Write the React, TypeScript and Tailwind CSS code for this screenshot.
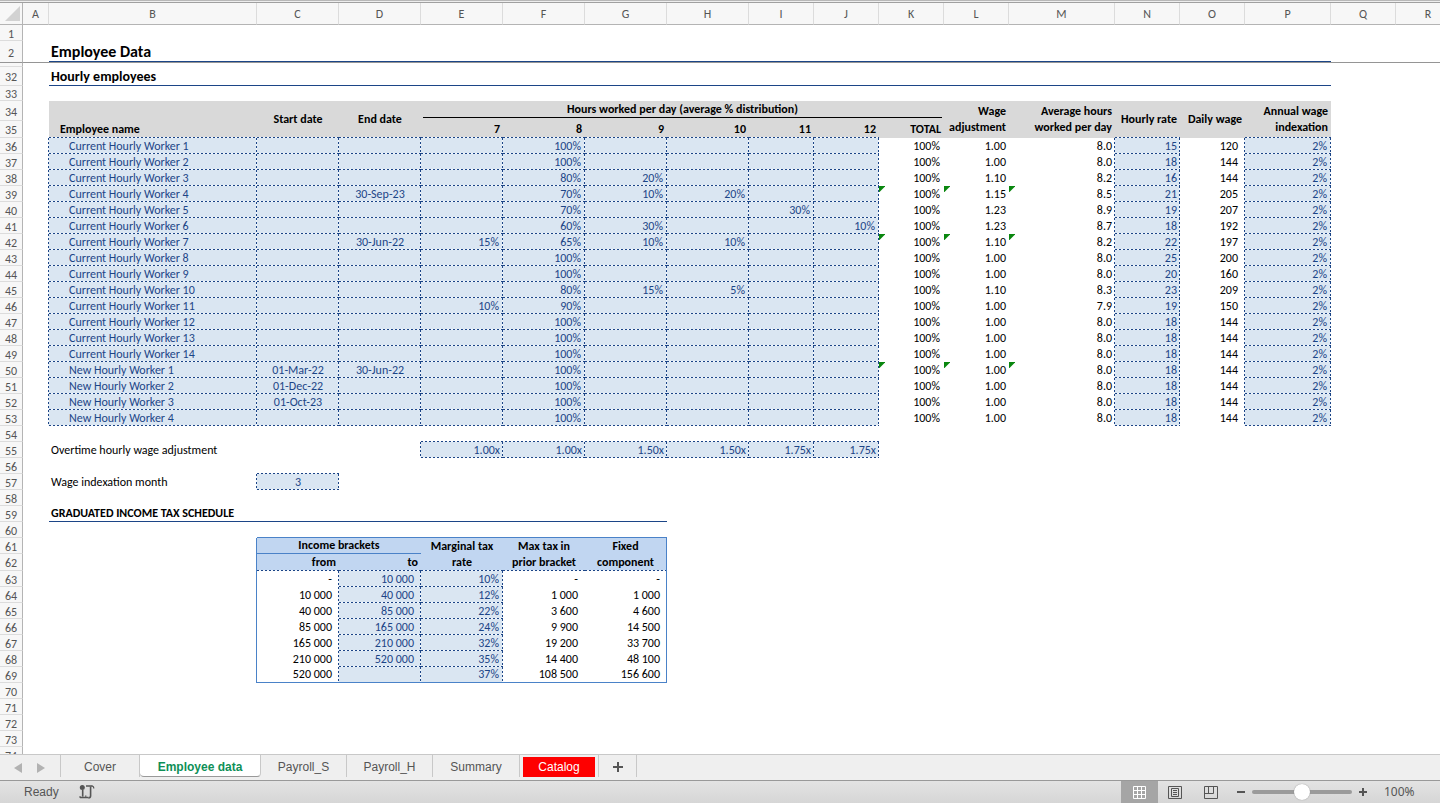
import type { ReactNode } from "react";
import clsx from "clsx";

/* Grid lines are painted as backgrounds so every cell keeps its full width. */
const DASH_BOTH =
  "[background-image:repeating-linear-gradient(90deg,#1c4587_0_2px,#f2f7fc_2px_4px),repeating-linear-gradient(180deg,#1c4587_0_2px,#f2f7fc_2px_4px)] [background-size:100%_1px,1px_100%] [background-position:0_100%,100%_0] bg-no-repeat";
const DASH_RIGHT =
  "[background-image:repeating-linear-gradient(180deg,#1c4587_0_2px,#f2f7fc_2px_4px)] [background-size:1px_100%] [background-position:100%_0] bg-no-repeat";
const DASH_BOTTOM =
  "[background-image:repeating-linear-gradient(90deg,#1c4587_0_2px,#f2f7fc_2px_4px)] [background-size:100%_1px] [background-position:0_100%] bg-no-repeat";

const INPUT = "bg-[#dae6f2] text-[#1c4587]";
const HEAD = "bg-[#d9d9d9] font-bold";
const BAND = "bg-[#c1d6f1] font-bold";
const NAVY_LINE = "border-b border-[#1c4587]";
const BLUE_B = "border-b border-[#4a82c8]";
const BLUE_R = "border-r border-[#4a82c8]";

const columns: [string, string][] = [
  ["A", "w-[26px]"],
  ["B", "w-[208px]"],
  ["C", "w-[82px]"],
  ["D", "w-[82px]"],
  ["E", "w-[82px]"],
  ["F", "w-[82px]"],
  ["G", "w-[82px]"],
  ["H", "w-[82px]"],
  ["I", "w-[65px]"],
  ["J", "w-[65px]"],
  ["K", "w-[65px]"],
  ["L", "w-[65px]"],
  ["M", "w-[106px]"],
  ["N", "w-[65px]"],
  ["O", "w-[65px]"],
  ["P", "w-[86px]"],
  ["Q", "w-[65px]"],
  ["R", ""],
];

type Worker = {
  name: string;
  start?: string;
  end?: string;
  hours: string[];
  adj: string;
  avg: string;
  rate: string;
  wage: string;
  flagged?: boolean;
};

const full = ["", "100%", "", "", "", ""];
const workers: Worker[] = [
  { name: "Current Hourly Worker 1", hours: full, adj: "1.00", avg: "8.0", rate: "15", wage: "120" },
  { name: "Current Hourly Worker 2", hours: full, adj: "1.00", avg: "8.0", rate: "18", wage: "144" },
  { name: "Current Hourly Worker 3", hours: ["", "80%", "20%", "", "", ""], adj: "1.10", avg: "8.2", rate: "16", wage: "144" },
  { name: "Current Hourly Worker 4", end: "30-Sep-23", hours: ["", "70%", "10%", "20%", "", ""], adj: "1.15", avg: "8.5", rate: "21", wage: "205", flagged: true },
  { name: "Current Hourly Worker 5", hours: ["", "70%", "", "", "30%", ""], adj: "1.23", avg: "8.9", rate: "19", wage: "207" },
  { name: "Current Hourly Worker 6", hours: ["", "60%", "30%", "", "", "10%"], adj: "1.23", avg: "8.7", rate: "18", wage: "192" },
  { name: "Current Hourly Worker 7", end: "30-Jun-22", hours: ["15%", "65%", "10%", "10%", "", ""], adj: "1.10", avg: "8.2", rate: "22", wage: "197", flagged: true },
  { name: "Current Hourly Worker 8", hours: full, adj: "1.00", avg: "8.0", rate: "25", wage: "200" },
  { name: "Current Hourly Worker 9", hours: full, adj: "1.00", avg: "8.0", rate: "20", wage: "160" },
  { name: "Current Hourly Worker 10", hours: ["", "80%", "15%", "5%", "", ""], adj: "1.10", avg: "8.3", rate: "23", wage: "209" },
  { name: "Current Hourly Worker 11", hours: ["10%", "90%", "", "", "", ""], adj: "1.00", avg: "7.9", rate: "19", wage: "150" },
  { name: "Current Hourly Worker 12", hours: full, adj: "1.00", avg: "8.0", rate: "18", wage: "144" },
  { name: "Current Hourly Worker 13", hours: full, adj: "1.00", avg: "8.0", rate: "18", wage: "144" },
  { name: "Current Hourly Worker 14", hours: full, adj: "1.00", avg: "8.0", rate: "18", wage: "144" },
  { name: "New Hourly Worker 1", start: "01-Mar-22", end: "30-Jun-22", hours: full, adj: "1.00", avg: "8.0", rate: "18", wage: "144", flagged: true },
  { name: "New Hourly Worker 2", start: "01-Dec-22", hours: full, adj: "1.00", avg: "8.0", rate: "18", wage: "144" },
  { name: "New Hourly Worker 3", start: "01-Oct-23", hours: full, adj: "1.00", avg: "8.0", rate: "18", wage: "144" },
  { name: "New Hourly Worker 4", hours: full, adj: "1.00", avg: "8.0", rate: "18", wage: "144" },
];

const brackets = [
  ["-", "10 000", "10%", "-", "-"],
  ["10 000", "40 000", "12%", "1 000", "1 000"],
  ["40 000", "85 000", "22%", "3 600", "4 600"],
  ["85 000", "165 000", "24%", "9 900", "14 500"],
  ["165 000", "210 000", "32%", "19 200", "33 700"],
  ["210 000", "520 000", "35%", "14 400", "48 100"],
  ["520 000", "", "37%", "108 500", "156 600"],
];

const overtime = ["1.00x", "1.00x", "1.50x", "1.50x", "1.75x", "1.75x"];

function Row({ n, h = "h-4", rule = "border-b-[#dcdcdc]", children }: { n: ReactNode; h?: string; rule?: string; children?: ReactNode }) {
  return (
    <tr className={h}>
      <th
        scope="row"
        className={clsx("border-r border-b border-r-[#b4b4b4] bg-[#f7f7f7] p-0 pt-[2px] text-center align-middle leading-3 font-normal text-[#555]", rule)}
      >
        {n}
      </th>
      {children}
    </tr>
  );
}

function Cell({ c, span, rows, children }: { c?: string; span?: number; rows?: number; children?: ReactNode }) {
  return (
    <td colSpan={span} rowSpan={rows} className={clsx("align-middle whitespace-nowrap", c)}>
      {children}
    </td>
  );
}

function Flag() {
  return (
    <svg className="absolute top-0 left-0 size-[6px]" viewBox="0 0 6 6" aria-hidden="true">
      <path d="M0 0H6.5L0 6.5Z" fill="#0a870f" />
    </svg>
  );
}

function Sheet() {
  const num = "pr-[3px] text-right";
  const pct = "pr-1 text-right";
  const acct = "pr-[7px] text-right";
  return (
    <table className="w-full min-w-[1400px] table-fixed border-separate border-spacing-0 font-[Calibri,Carlito,Lato,sans-serif] text-[12px] leading-[15px] text-black">
      <colgroup>
        <col className="w-[23px]" />
        {columns.map(([name, w]) => (
          <col key={name} className={w} />
        ))}
      </colgroup>
      <thead>
        <tr className="h-[22px]">
          <th className="border-r border-b border-[#b4b4b4] bg-[#f7f7f7] p-0" aria-label="Select all">
            <svg className="ml-[5px] size-[15px]" viewBox="0 0 15 15" aria-hidden="true">
              <path d="M15 0V15H0Z" fill="#d2d2d2" />
            </svg>
          </th>
          {columns.map(([name]) => (
            <th
              key={name}
              scope="col"
              className={clsx(
                "border-b border-r-[#dcdcdc] border-b-[#b4b4b4] bg-[#f7f7f7] pt-[2px] font-normal text-[#555]",
                name === "R" ? "pl-5" : "border-r",
              )}
            >
              {name}
            </th>
          ))}
        </tr>
      </thead>
      <tbody>
        <Row n="1">
          <Cell span={18} />
        </Row>
        <Row n="2" h="h-[22px]" rule="border-b-[#959595]">
          <Cell c="border-b border-[#959595]" />
          <Cell span={15} c="border-b border-[#959595]">
            <h1 className="border-b border-[#1c4587] pt-[2px] pl-[2px] text-[16px] leading-[18px] font-bold">Employee Data</h1>
          </Cell>
          <Cell span={2} c="border-b border-[#959595]" />
        </Row>
        <tr className="h-1">
          <th className="border-r border-b border-r-[#b4b4b4] border-b-[#dcdcdc] bg-[#f7f7f7] p-0" />
          <Cell span={18} />
        </tr>
        <Row n="32" h="h-[19px]">
          <Cell />
          <Cell span={15} c={NAVY_LINE}>
            <h2 className="pt-[2px] pl-[2px] text-[14px] leading-4 font-bold">Hourly employees</h2>
          </Cell>
          <Cell span={2} />
        </Row>
        <Row n="33" h="h-[15px]">
          <Cell span={18} />
        </Row>
        <Row n="34" h="h-5">
          <Cell />
          <Cell c={HEAD} />
          <Cell rows={2} c={clsx(HEAD, DASH_BOTTOM, "text-center")}>Start date</Cell>
          <Cell rows={2} c={clsx(HEAD, DASH_BOTTOM, "text-center")}>End date</Cell>
          <Cell span={7} c={clsx(HEAD, "align-top text-center")}>
            <div className="mx-[2px] border-b border-black pt-px">Hours worked per day (average % distribution)</div>
          </Cell>
          <Cell rows={2} c={clsx(HEAD, num, "pb-[2px] leading-4")}>Wage<br />adjustment</Cell>
          <Cell rows={2} c={clsx(HEAD, num, "pb-[2px] leading-4")}>Average hours<br />worked per day</Cell>
          <Cell rows={2} c={clsx(HEAD, DASH_BOTTOM, num)}>Hourly rate</Cell>
          <Cell rows={2} c={clsx(HEAD, num)}>Daily wage</Cell>
          <Cell rows={2} c={clsx(HEAD, DASH_BOTTOM, num, "pb-[2px] leading-4")}>Annual wage<br />indexation</Cell>
          <Cell span={2} />
        </Row>
        <Row n="35" h="h-[17px]">
          <Cell />
          <Cell c={clsx(HEAD, DASH_BOTTOM, "pl-[11px]")}>Employee name</Cell>
          {["7", "8", "9", "10", "11", "12"].map((h) => (
            <Cell key={h} c={clsx(HEAD, DASH_BOTTOM, num)}>{h}</Cell>
          ))}
          <Cell c={clsx(HEAD, num)}>TOTAL</Cell>
          <Cell span={2} />
        </Row>
        {workers.map((w, i) => (
          <Row key={w.name} n={36 + i}>
            <Cell c={DASH_RIGHT} />
            <Cell c={clsx(INPUT, DASH_BOTH, "pl-5")}>{w.name}</Cell>
            <Cell c={clsx(INPUT, DASH_BOTH, "text-center")}>{w.start}</Cell>
            <Cell c={clsx(INPUT, DASH_BOTH, "text-center")}>{w.end}</Cell>
            {w.hours.map((h, k) => (
              <Cell key={k} c={clsx(INPUT, DASH_BOTH, pct)}>{h}</Cell>
            ))}
            <Cell c={clsx("relative", pct)}>{w.flagged && <Flag />}100%</Cell>
            <Cell c={clsx("relative", num)}>{w.flagged && <Flag />}{w.adj}</Cell>
            <Cell c={clsx("relative", DASH_RIGHT, num)}>{w.flagged && <Flag />}{w.avg}</Cell>
            <Cell c={clsx(INPUT, DASH_BOTH, num)}>{w.rate}</Cell>
            <Cell c={clsx(DASH_RIGHT, acct)}>{w.wage}</Cell>
            <Cell c={clsx(INPUT, DASH_BOTH, pct)}>2%</Cell>
            <Cell span={2} />
          </Row>
        ))}
        <Row n="54">
          <Cell span={4} />
          <Cell span={6} c={DASH_BOTTOM} />
          <Cell span={8} />
        </Row>
        <Row n="55">
          <Cell />
          <Cell span={3} c={clsx(DASH_RIGHT, "pl-[2px]")}>Overtime hourly wage adjustment</Cell>
          {overtime.map((o, k) => (
            <Cell key={k} c={clsx(INPUT, DASH_BOTH, num)}>{o}</Cell>
          ))}
          <Cell span={8} />
        </Row>
        <Row n="56">
          <Cell span={2} />
          <Cell c={DASH_BOTTOM} />
          <Cell span={15} />
        </Row>
        <Row n="57">
          <Cell />
          <Cell c={clsx(DASH_RIGHT, "pl-[2px]")}>Wage indexation month</Cell>
          <Cell c={clsx(INPUT, DASH_BOTH, "text-center")}>3</Cell>
          <Cell span={15} />
        </Row>
        <Row n="58">
          <Cell span={18} />
        </Row>
        <Row n="59">
          <Cell />
          <Cell span={6} c={clsx(NAVY_LINE, "pl-[2px] font-bold")}>GRADUATED INCOME TAX SCHEDULE</Cell>
          <Cell span={11} />
        </Row>
        <Row n="60">
          <Cell span={2} />
          <Cell span={5} c={BLUE_B} />
          <Cell span={11} />
        </Row>
        <Row n="61">
          <Cell />
          <Cell c={BLUE_R} />
          <Cell span={2} c={clsx(BAND, BLUE_B, "text-center")}>Income brackets</Cell>
          <Cell c={clsx(BAND, "text-center")}>Marginal tax</Cell>
          <Cell c={clsx(BAND, "text-center")}>Max tax in</Cell>
          <Cell c={clsx(BAND, BLUE_R, "text-center")}>Fixed</Cell>
          <Cell span={11} />
        </Row>
        <Row n="62" h="h-[17px]">
          <Cell />
          <Cell c={BLUE_R} />
          <Cell c={clsx(BAND, DASH_BOTTOM, num)}>from</Cell>
          <Cell c={clsx(BAND, DASH_BOTTOM, num)}>to</Cell>
          <Cell c={clsx(BAND, DASH_BOTTOM, "text-center")}>rate</Cell>
          <Cell c={clsx(BAND, DASH_BOTTOM, "text-center")}>prior bracket</Cell>
          <Cell c={clsx(BAND, DASH_BOTTOM, BLUE_R, "text-center")}>component</Cell>
          <Cell span={11} />
        </Row>
        {brackets.map(([from, to, rate, prior, fixed], i) => {
          const last = i === brackets.length - 1;
          const input = last ? clsx(INPUT, DASH_RIGHT, BLUE_B) : clsx(INPUT, DASH_BOTH);
          const edge = last && BLUE_B;
          return (
            <Row key={rate} n={63 + i}>
              <Cell />
              <Cell c={BLUE_R} />
              <Cell c={clsx(DASH_RIGHT, acct, edge)}>{from}</Cell>
              <Cell c={clsx(input, acct)}>{to}</Cell>
              <Cell c={clsx(input, pct)}>{rate}</Cell>
              <Cell c={clsx(acct, edge)}>{prior}</Cell>
              <Cell c={clsx("border-r border-[#4a82c8] pr-[6px] text-right", edge)}>{fixed}</Cell>
              <Cell span={11} />
            </Row>
          );
        })}
        {[70, 71, 72, 73, 74].map((n) => (
          <Row key={n} n={n}>
            <Cell span={18} />
          </Row>
        ))}
      </tbody>
    </table>
  );
}

const tab = "h-[22px] border-r border-[#c8c8c8] text-[#555]";

function SheetTabs() {
  return (
    <nav aria-label="Sheets" className="flex h-[27px] shrink-0 border-t border-b border-t-[#c8c8c8] border-b-[#999] bg-[#efefef] text-[12px]">
      <div className="flex h-[22px] w-[61px] items-center gap-[15px] border-r border-[#c8c8c8] pt-1 pl-[14px]">
        <button type="button" aria-label="Previous sheet">
          <svg className="h-[10px] w-2" viewBox="0 0 8 10" aria-hidden="true"><path d="M8 0V10L0 5Z" fill="#b2b2b2" /></svg>
        </button>
        <button type="button" aria-label="Next sheet">
          <svg className="h-[10px] w-2" viewBox="0 0 8 10" aria-hidden="true"><path d="M0 0V10L8 5Z" fill="#b2b2b2" /></svg>
        </button>
      </div>
      <button type="button" className={clsx(tab, "w-[79px] pt-[2px]")}>Cover</button>
      <button type="button" aria-current="page" className="h-[22px] w-[121px] rounded-b-sm border-r border-b border-r-[#c8c8c8] border-b-[#999] bg-white pt-[2px] font-bold text-[#0f8f57]">
        Employee data
      </button>
      <button type="button" className={clsx(tab, "w-[86px] pt-[2px]")}>Payroll_S</button>
      <button type="button" className={clsx(tab, "w-[86px] pt-[2px]")}>Payroll_H</button>
      <button type="button" className={clsx(tab, "w-[87px] pt-[2px]")}>Summary</button>
      <button type="button" className={clsx(tab, "w-[79px] px-[3px] pt-[2px]")}>
        <span className="block h-5 bg-[#fe0000] leading-5 text-white">Catalog</span>
      </button>
      <button type="button" aria-label="Add sheet" className={clsx(tab, "flex w-[38px] items-center justify-center pt-[2px]")}>
        <svg className="size-[10px]" viewBox="0 0 10 10" aria-hidden="true"><path d="M5 0V10M0 5H10" stroke="#555" strokeWidth="2" /></svg>
      </button>
    </nav>
  );
}

function StatusBar() {
  return (
    <footer className="flex h-[22px] shrink-0 items-center bg-linear-to-b from-[#e3e3e3] to-[#d6d6d6] pl-6 text-[12px] text-[#555]">
      <span>Ready</span>
      <button type="button" aria-label="Record macro" className="ml-5">
        <svg className="h-[14px] w-4" viewBox="0 0 16 14" fill="none" aria-hidden="true">
          <circle cx="3.3" cy="2.5" r="2.5" fill="#555" />
          <path d="M7 1H13.5M3.7 5V11.5M1 12.5H9.5" stroke="#555" strokeWidth="1.6" />
          <path d="M11.6 1.5V10.8Q11.6 13 9.4 13" stroke="#555" strokeWidth="1.6" />
          <path d="M12.8 1Q14.8 1 14.8 3.4" stroke="#555" strokeWidth="1.2" />
          <path d="M1 11V13M6.8 10.4V12" stroke="#555" strokeWidth="1" />
        </svg>
      </button>
      <div className="ml-auto flex h-full items-center">
        <button type="button" aria-label="Normal view" aria-pressed="true" className="flex h-full w-[37px] items-center justify-center bg-[#a5a5a5]">
          <svg className="size-[13px]" viewBox="0 0 13 13" fill="none" stroke="#fff" aria-hidden="true">
            <path d="M.5 .5H12.5V12.5H.5ZM4.5 0V13M8.5 0V13M0 4.5H13M0 8.5H13" />
          </svg>
        </button>
        <button type="button" aria-label="Page layout" className="flex h-full w-[34px] items-center justify-center">
          <svg className="h-[13px] w-[14px]" viewBox="0 0 14 13" fill="none" stroke="#555" aria-hidden="true">
            <path d="M.5 .5H13.5V12.5H.5ZM3.5 2.5H10.5V10.5H3.5ZM5 4.5H9M5 6.5H9M5 8.5H9" />
          </svg>
        </button>
        <button type="button" aria-label="Page break preview" className="flex h-full w-[38px] items-center justify-center">
          <svg className="h-[13px] w-[14px]" viewBox="0 0 14 13" fill="none" stroke="#555" aria-hidden="true">
            <path d="M.5 .5H13.5V12.5H.5ZM4.5 .5V7.5M9.5 .5V7.5M.5 7.5H9.5" />
          </svg>
        </button>
        <button type="button" aria-label="Zoom out" className="flex w-[22px] justify-center">
          <svg className="size-2" viewBox="0 0 8 8" aria-hidden="true"><path d="M0 4H8" stroke="#555" strokeWidth="2" /></svg>
        </button>
        <input
          type="range"
          aria-label="Zoom"
          min={0}
          max={200}
          defaultValue={100}
          className="h-1 w-[100px] appearance-none rounded-full bg-[#9b9b9b] [&::-webkit-slider-thumb]:size-4 [&::-webkit-slider-thumb]:appearance-none [&::-webkit-slider-thumb]:rounded-full [&::-webkit-slider-thumb]:bg-white [&::-webkit-slider-thumb]:shadow-[0_0_1px_#777]"
        />
        <button type="button" aria-label="Zoom in" className="flex w-[22px] justify-center">
          <svg className="size-2" viewBox="0 0 8 8" aria-hidden="true"><path d="M0 4H8M4 0V8" stroke="#555" strokeWidth="2" /></svg>
        </button>
        <span className="w-[66px] pl-[10px] font-['Noto_Sans',sans-serif]">100%</span>
      </div>
    </footer>
  );
}

export default function App() {
  return (
    <div className="flex h-screen flex-col overflow-hidden bg-white font-['Liberation_Sans',Arial,sans-serif]">
      <div className="h-[3px] shrink-0 border-t border-b border-t-[#b8b8b8] border-b-[#a0a0a0] bg-[#eee]" />
      <main className="min-h-0 flex-1 overflow-hidden">
        <Sheet />
      </main>
      <SheetTabs />
      <StatusBar />
    </div>
  );
}
